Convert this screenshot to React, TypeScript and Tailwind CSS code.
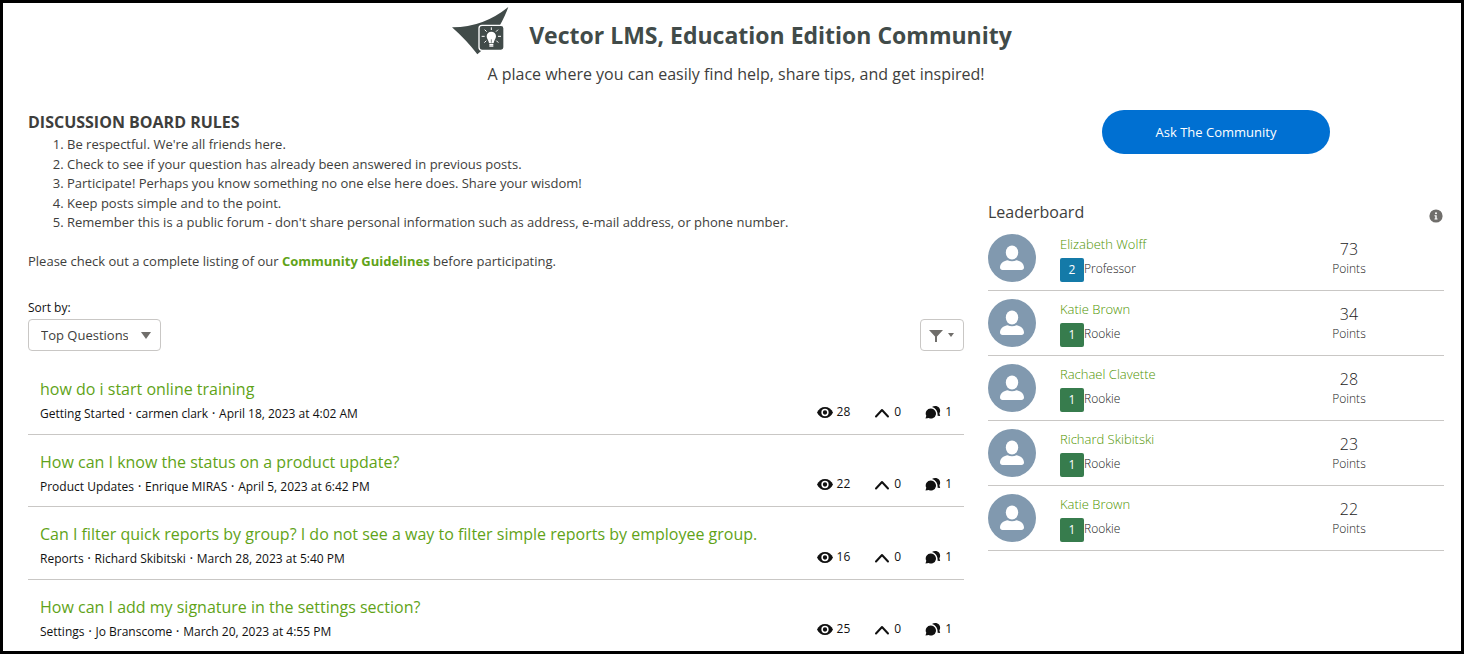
import React from 'react';

const rules = [
    "Be respectful. We're all friends here.",
    'Check to see if your question has already been answered in previous posts.',
    'Participate! Perhaps you know something no one else here does. Share your wisdom!',
    'Keep posts simple and to the point.',
    "Remember this is a public forum - don't share personal information such as address, e-mail address, or phone number.",
];

const questions = [
    { title: 'how do i start online training', topic: 'Getting Started', author: 'carmen clark', date: 'April 18, 2023 at 4:02 AM', views: 28, votes: 0, answers: 1 },
    { title: 'How can I know the status on a product update?', topic: 'Product Updates', author: 'Enrique MIRAS', date: 'April 5, 2023 at 6:42 PM', views: 22, votes: 0, answers: 1 },
    { title: 'Can I filter quick reports by group? I do not see a way to filter simple reports by employee group.', topic: 'Reports', author: 'Richard Skibitski', date: 'March 28, 2023 at 5:40 PM', views: 16, votes: 0, answers: 1 },
    { title: 'How can I add my signature in the settings section?', topic: 'Settings', author: 'Jo Branscome', date: 'March 20, 2023 at 4:55 PM', views: 25, votes: 0, answers: 1 },
];

const leaders = [
    { name: 'Elizabeth Wolff', level: 2, rank: 'Professor', points: 73 },
    { name: 'Katie Brown', level: 1, rank: 'Rookie', points: 34 },
    { name: 'Rachael Clavette', level: 1, rank: 'Rookie', points: 28 },
    { name: 'Richard Skibitski', level: 1, rank: 'Rookie', points: 23 },
    { name: 'Katie Brown', level: 1, rank: 'Rookie', points: 22 },
];

function Logo() {
    return (
        <svg viewBox="0 0 171 144" className="h-12 w-[57px]" aria-hidden="true">
            <path d="M0 61 Q92 62 169 0 Q160 26 141 60 L141 100 L90 130 L76 142 Q44 100 0 61Z" fill="#414b49" />
            <rect x="81" y="55" width="75" height="75" rx="9" fill="#414b49" stroke="#fff" strokeWidth="4" />
            <path d="M118 74a14 14 0 0 0-14 14c0 8 6 12 7 20h14c1-8 7-12 7-20a14 14 0 0 0-14-14Z" fill="#fff" />
            <path d="M112 112h12M112 117h12" stroke="#fff" strokeWidth="4" />
            <path d="M118 97v10" stroke="#414b49" strokeWidth="2" fill="none" />
            <path d="M118 61v8M98 68l6 6M138 68l-6 6M89 88h9M138 88h9M97 107l6-6M139 107l-6-6" stroke="#fff" strokeWidth="3" />
        </svg>
    );
}

function EyeIcon() {
    return (
        <svg viewBox="0 0 16 16" className="size-4" aria-hidden="true">
            <path d="M0 8.5C1.5 5 4.500 3 8 3s6.500 2 8 5.500C14.500 12 11.500 14 8 14S1.500 12 0 8.500Z" fill="#111" />
            <circle cx="8" cy="8.500" r="2.900" fill="#111" stroke="#fff" strokeWidth="1.500" />
        </svg>
    );
}

function UpIcon() {
    return (
        <svg viewBox="0 0 16 16" className="size-4" aria-hidden="true">
            <path d="M2 12.500 8 6l6 6.500" fill="none" stroke="#111" strokeWidth="2" strokeLinecap="round" strokeLinejoin="round" />
        </svg>
    );
}

function AnswersIcon() {
    return (
        <svg viewBox="0 0 16 16" className="size-4" aria-hidden="true">
            <path d="M6 4.500a5 5 0 1 1-2.200 9.500L.5 14.500l.8-2.700A5 5 0 0 1 6 4.500Z" fill="#111" />
            <path d="M7 3c2-1.500 5.500-1.400 7.200.8 1.300 1.800 1.200 4 .2 5.600l.8 2.600-2.600-.3c.4-4.200-1.700-7.400-5.600-8.700Z" fill="#111" />
        </svg>
    );
}

function Avatar() {
    return (
        <svg viewBox="0 0 48 48" className="size-12 shrink-0" aria-hidden="true">
            <circle cx="24" cy="24" r="24" fill="#8199af" />
            <ellipse cx="24" cy="18.500" rx="6.200" ry="7" fill="#fff" />
            <path d="M12 33.500c0-4.500 4.500-7 7.500-7.300 2.800 1.500 6.200 1.500 9 0 3 .3 7.500 2.800 7.500 7.300 0 1.500-1 2.500-2.500 2.500h-19c-1.500 0-2.500-1-2.500-2.500Z" fill="#fff" />
        </svg>
    );
}

function Stat({ icon, value, label }: { icon: React.ReactNode; value: number; label: string }) {
    return (
        <span className="flex items-center gap-1" title={label}>
            {icon}
            <span>{value}</span>
        </span>
    );
}

function Dot() {
    return <span className="text-sm leading-none">{' · '}</span>;
}

export default function App() {
    return (
        <div className="min-h-screen border-3 border-black bg-white pl-[13px] pr-[5px] font-['Open_Sans',sans-serif] text-[13px] leading-normal text-[#3e3e3c]">
            <header className="flex flex-col items-center pt-1">
                <div className="mr-2 flex items-center gap-5">
                    <Logo />
                    <h1 className="pt-2 text-[23px] font-bold text-[#414b49]">Vector LMS, Education Edition Community</h1>
                </div>
                <p className="mt-[7px] text-base">A place where you can easily find help, share tips, and get inspired!</p>
            </header>

            <div className="mt-6 flex">
                <main className="w-2/3 px-3">
                    <h2 className="pb-px text-base font-bold">DISCUSSION BOARD RULES</h2>
                    <ol className="list-decimal pl-[39px]">
                        {rules.map((rule) => (
                            <li key={rule}>{rule}</li>
                        ))}
                    </ol>
                    <p className="mt-[19px]">
                        Please check out a complete listing of our{' '}
                        <a href="#guidelines" className="font-bold text-[#5fa318]">Community Guidelines</a> before participating.
                    </p>

                    <div className="mt-[26px] flex items-end justify-between">
                        <div>
                            <label htmlFor="sort" className="block text-xs leading-[22px] text-[#111]">Sort by:</label>
                            <div className="relative">
                                <select id="sort" className="block h-8 w-[133px] appearance-none rounded border border-[#c9c7c5] bg-white pl-3 pr-8 pt-px">
                                    <option>Top Questions</option>
                                </select>
                                <svg viewBox="0 0 10 7" className="pointer-events-none absolute right-[10px] top-[13px] h-[7px] w-[10px]" aria-hidden="true">
                                    <path d="M0 0h10L5 7Z" fill="#706e6b" />
                                </svg>
                            </div>
                        </div>
                        <button type="button" aria-label="Filter" className="flex h-8 w-11 items-center justify-center gap-[5px] rounded border border-[#c9c7c5] bg-white pr-0.5">
                            <svg viewBox="0 0 14 14" className="size-[14px]" aria-hidden="true">
                                <path d="M0 2h14L8 8.500V14H6V8.500Z" fill="#706e6b" />
                            </svg>
                            <svg viewBox="0 0 6 4" className="h-1 w-[6px]" aria-hidden="true">
                                <path d="M0 0h6L3 4Z" fill="#706e6b" />
                            </svg>
                        </button>
                    </div>

                    <ul className="mt-[11px]">
                        {questions.map((q) => (
                            <li key={q.title} className="flex items-end justify-between border-b border-[#c9c7c5] px-3 pb-[10px] pt-[15px] last:border-b-0">
                                <div>
                                    <a href="#question" className="block text-base text-[#5fa318]">{q.title}</a>
                                    <p className="mt-[3px] text-[#111]">
                                        <span className="text-xs">{q.topic}<Dot />{q.author}<Dot />{q.date}</span>
                                    </p>
                                </div>
                                <div className="mb-0.5 flex gap-6 text-xs leading-5 text-[#111]">
                                    <Stat icon={<EyeIcon />} value={q.views} label="Views" />
                                    <Stat icon={<UpIcon />} value={q.votes} label="Upvotes" />
                                    <Stat icon={<AnswersIcon />} value={q.answers} label="Answers" />
                                </div>
                            </li>
                        ))}
                    </ul>
                </main>

                <aside className="w-1/3 px-3">
                    <button type="button" className="mx-auto block h-11 w-1/2 rounded-full bg-[#0070d2] pt-px text-white">Ask The Community</button>

                    <div className="mt-[46px] flex items-center justify-between">
                        <h2 className="text-base">Leaderboard</h2>
                        <button type="button" aria-label="About the leaderboard" className="mr-px mt-2">
                            <svg viewBox="0 0 14 14" className="size-[14px]" aria-hidden="true">
                                <circle cx="7" cy="7" r="6.600" fill="#706e6b" />
                                <circle cx="7" cy="4.200" r="1" fill="#fff" />
                                <path d="M5.500 6.200h2.200v3.200h.8v1h-3v-1h.8V7.200h-.8Z" fill="#fff" />
                            </svg>
                        </button>
                    </div>
                    <ul className="mt-0.5">
                        {leaders.map((leader, i) => (
                            <li key={i} className="flex border-b border-[#c9c7c5] py-2">
                                <Avatar />
                                <div className="ml-6 flex-1">
                                    <a href="#profile" className="block font-light leading-5 text-[#4f9400]">{leader.name}</a>
                                    <div className="mt-1 flex">
                                        <span className={`size-6 rounded-xs text-center text-xs leading-6 text-white ${leader.level === 2 ? 'bg-[#147aa8]' : 'bg-[#377c4d]'}`}>{leader.level}</span>
                                        <span className="text-xs font-light leading-[22px] text-[#222]">{leader.rank}</span>
                                    </div>
                                </div>
                                <div className="w-5/12 pt-[3px] text-center font-light text-[#222]">
                                    <div className="text-base leading-6">{leader.points}</div>
                                    <div className="text-xs">Points</div>
                                </div>
                            </li>
                        ))}
                    </ul>
                </aside>
            </div>
        </div>
    );
}
